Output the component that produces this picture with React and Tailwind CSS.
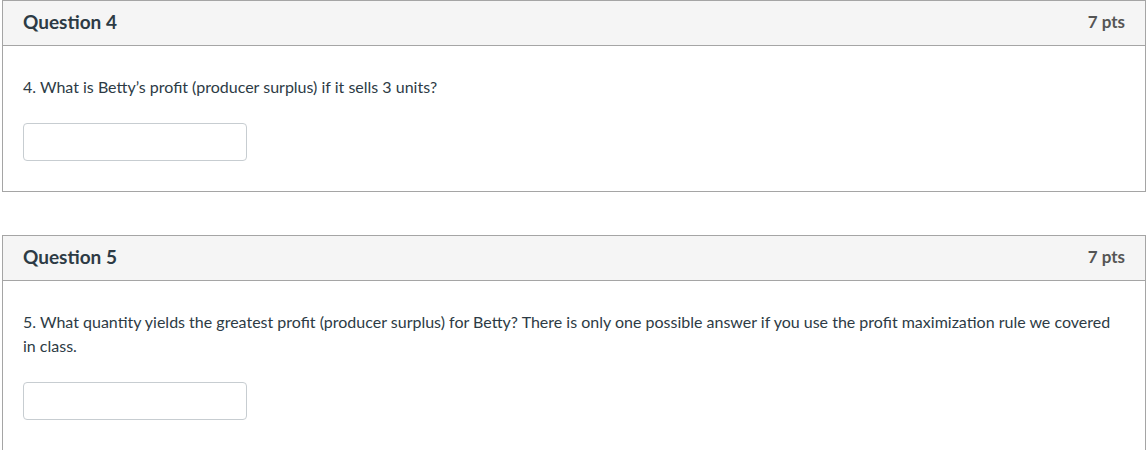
const questions = [
  {
    id: 4,
    points: 7,
    text: '4. What is Betty\u2019s profit (producer surplus) if it sells 3 units?',
  },
  {
    id: 5,
    points: 7,
    text: '5. What quantity yields the greatest profit (producer surplus) for Betty? There is only one possible answer if you use the profit maximization rule we covered in class.',
  },
];

function QuestionCard({ question }) {
  return (
    <div className="border border-[#a5a5a5] bg-white">
      {/* Header */}
      <div className="flex h-[45px] items-center justify-between border-b border-[#a5a5a5] bg-[#f5f5f5] pb-[2px] pl-[20px] pr-[20px]">
        <h2 className="text-[19px] font-bold text-[#2d3b45]">Question {question.id}</h2>
        <span className="text-[17px] font-bold text-[#555]">{question.points} pts</span>
      </div>

      {/* Body */}
      <div className="px-[20px] pb-[30px] pt-[29px]">
        <p className="text-[16px] leading-[24px] text-[#2d3b45]">{question.text}</p>
        <input
          type="text"
          className="mt-[24px] block h-[38px] w-[224px] rounded-[4px] border border-[#c7cdd1] bg-white px-2 outline-none"
        />
      </div>
    </div>
  );
}

export default function App() {
  return (
    <div className="min-h-[450px] bg-white pl-[2px] font-['Lato',sans-serif]">
      <div className="flex w-[1144px] flex-col gap-[43px]">
        {questions.map((q) => (
          <QuestionCard key={q.id} question={q} />
        ))}
      </div>
    </div>
  );
}
